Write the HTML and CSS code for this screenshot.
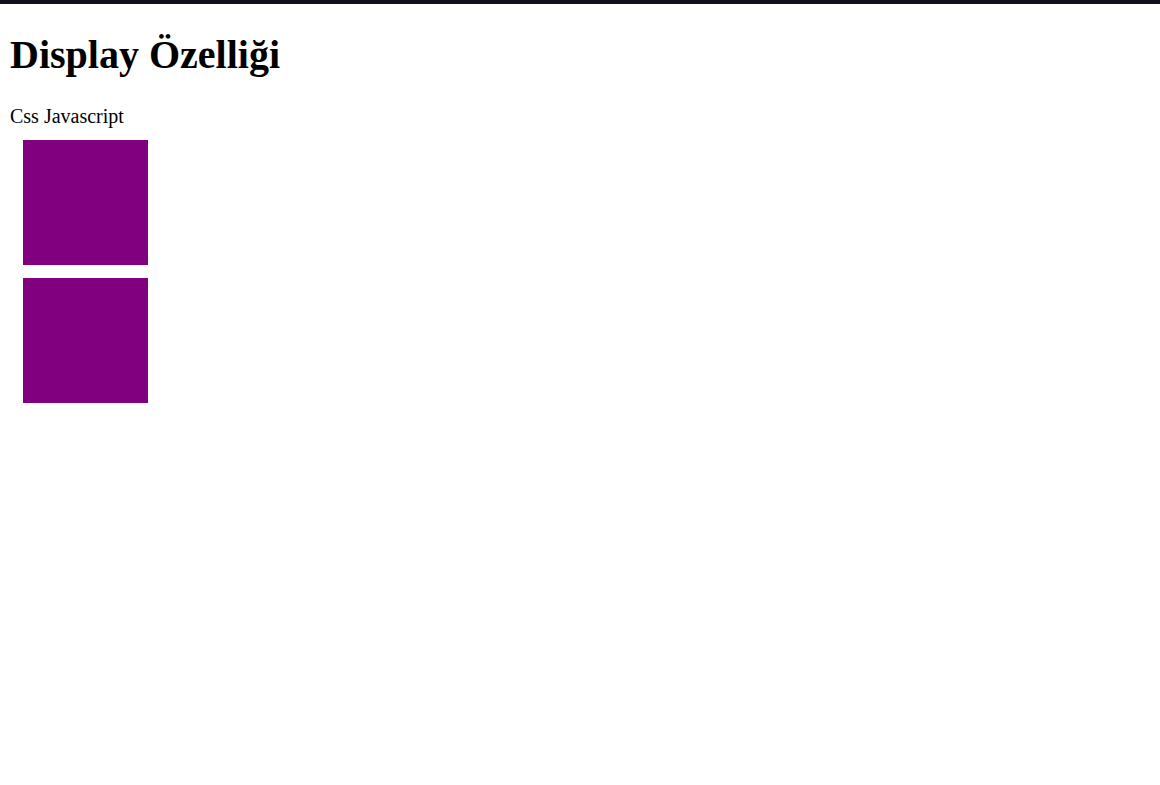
FILE: index.html
```html
<!DOCTYPE html>
<html lang="tr">
<head>
    <meta charset="UTF-8">
    <meta name="viewport" content="width=device-width, initial-scale=1.0">
    <title>Display Özelliği</title>
    <link rel="stylesheet" href="styles.css">
</head>
<body>
    <h1>Display Özelliği</h1>

    <span class="tag">Css</span>
    <span class="tag">Javascript</span>

    <div class="box"></div>
    <div class="box"></div>
</body>
</html>
```

FILE: styles.css
```css
html {
    border-top: 4px solid #10101e;
}

body {
    font-family: 'Liberation Serif', 'Times New Roman', serif;
    font-size: 20px;
    margin: 10px;
    color: #000;
    background-color: #fff;
}

h1 {
    font-size: 40px;
    margin: 16.8px 0 26.8px;
}

.box {
    width: 125px;
    height: 125px;
    margin: 12.5px;
    background-color: purple;
}
```
